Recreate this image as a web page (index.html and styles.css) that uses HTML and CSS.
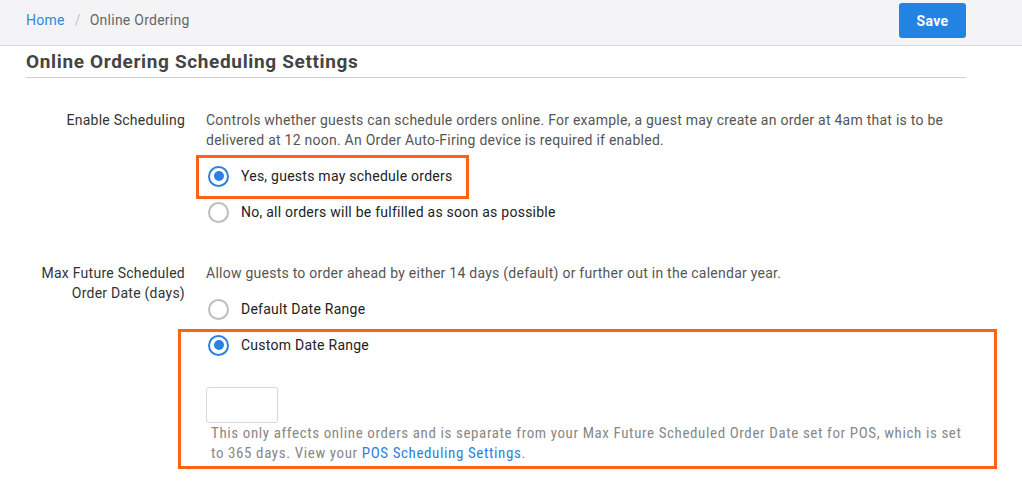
FILE: index.html
```html
<!DOCTYPE html>
<html>
<head>
<meta charset="utf-8">
<link rel="stylesheet" href="styles.css">
</head>
<body>
<header class="topbar">
  <nav class="crumbs">
    <a class="crumb-link" href="#">Home</a>
    <span class="crumb-sep">/</span>
    <span class="crumb-current">Online Ordering</span>
  </nav>
  <button class="save-btn">Save</button>
</header>
<main class="page">
  <h1 class="title">Online Ordering Scheduling Settings</h1>

  <section class="row row-first">
    <div class="label">Enable Scheduling</div>
    <div class="field">
      <p class="desc">Controls whether guests can schedule orders online. For example, a guest may create an order at 4am that is to be delivered at 12 noon. An Order Auto-Firing device is required if enabled.</p>
      <div class="option-wrap">
        <label class="option"><span class="radio checked"></span><span>Yes, guests may schedule orders</span></label>
        <span class="highlight hl-one"></span>
      </div>
      <label class="option"><span class="radio"></span><span>No, all orders will be fulfilled as soon as possible</span></label>
    </div>
  </section>

  <section class="row row-second">
    <div class="label">Max Future Scheduled<br>Order Date (days)</div>
    <div class="field">
      <p class="desc">Allow guests to order ahead by either 14 days (default) or further out in the calendar year.</p>
      <label class="option"><span class="radio"></span><span>Default Date Range</span></label>
      <div class="custom-wrap">
        <label class="option"><span class="radio checked"></span><span>Custom Date Range</span></label>
        <input class="days-input" type="text">
        <p class="note">This only affects online orders and is separate from your Max Future Scheduled Order Date set for POS, which is set to 365 days. View your <a class="note-link" href="#">POS Scheduling Settings</a>.</p>
        <span class="highlight hl-two"></span>
      </div>
    </div>
  </section>
</main>
</body>
</html>
```
FILE: styles.css
```css
* { box-sizing: border-box; }
html, body { margin: 0; padding: 0; }
body {
  font-family: Roboto, "Liberation Sans", sans-serif;
  font-size: 14px;
  letter-spacing: 0.25px;
  color: #333;
  background: #fff;
  width: 1022px;
  height: 482px;
  overflow: hidden;
}
.topbar {
  height: 46px;
  background: #f4f4f6;
  border-bottom: 1px solid #dcdce0;
  display: flex;
  align-items: flex-start;
  justify-content: space-between;
  padding: 0 56px 0 26px;
}
.crumbs {
  display: flex;
  align-items: center;
  height: 40px;
  font-size: 14px;
}
.crumb-link { color: #2f86de; text-decoration: none; }
.crumb-sep { color: #c4c4c8; margin: 0 9px 0 10px; }
.crumb-current { color: #666; }
.save-btn {
  margin-top: 3px;
  width: 67px;
  height: 35px;
  background: #2383e2;
  color: #fff;
  border: none;
  border-radius: 3px;
  font-family: Roboto, "Liberation Sans", sans-serif;
  font-weight: 700;
  font-size: 14px;
  letter-spacing: 0.3px;
  padding: 0;
}
.page {
  padding: 0 56px 0 26px;
}
.title {
  margin: 3px 0 0 0;
  font-size: 19px;
  line-height: 26px;
  font-weight: 700;
  letter-spacing: 0.65px;
  color: #444;
  padding-bottom: 2px;
  border-bottom: 1px solid #cfcfd4;
}
.row {
  display: grid;
  grid-template-columns: 159px 1fr;
  column-gap: 21px;
}
.row-first { margin-top: 32px; }
.row-second { margin-top: 33px; }
.label {
  text-align: right;
  line-height: 20px;
  color: #333;
}
.field { position: relative; }
.desc {
  margin: 0 0 8px 0;
  line-height: 20px;
  color: #555;
}
.option {
  display: flex;
  align-items: center;
  height: 36px;
  color: #222;
  gap: 12px;
  padding-left: 2px;
}
.radio {
  width: 21px;
  height: 21px;
  border-radius: 50%;
  border: 2px solid #bdbdbd;
  background: #fff;
  flex: none;
  position: relative;
}
.radio.checked { border-color: #2b80e0; }
.radio.checked::after {
  content: "";
  position: absolute;
  left: 3.5px;
  top: 3.5px;
  width: 10px;
  height: 10px;
  border-radius: 50%;
  background: #2b80e0;
}
.option-wrap, .custom-wrap { position: relative; }
.highlight {
  position: absolute;
  border: 3px solid #fd6215;
  pointer-events: none;
}
.hl-one {
  left: -10px;
  top: -3px;
  width: 273px;
  height: 44px;
}
.hl-two {
  left: -28px;
  top: 2px;
  width: 819px;
  height: 140px;
}
.days-input {
  display: block;
  margin-top: 24px;
  width: 72px;
  height: 36px;
  border: 1px solid #d8d8dc;
  border-radius: 3px;
  background: #fff;
}
.note {
  margin: 0;
  padding-left: 5px;
  max-width: 760px;
  font-family: "Liberation Sans Narrow", "Roboto Condensed", Roboto, sans-serif;
  font-stretch: condensed;
  font-size: 15px;
  letter-spacing: 0.6px;
  line-height: 20px;
  color: #888;
}
.note-link { color: #2f7fd8; text-decoration: none; }
```
